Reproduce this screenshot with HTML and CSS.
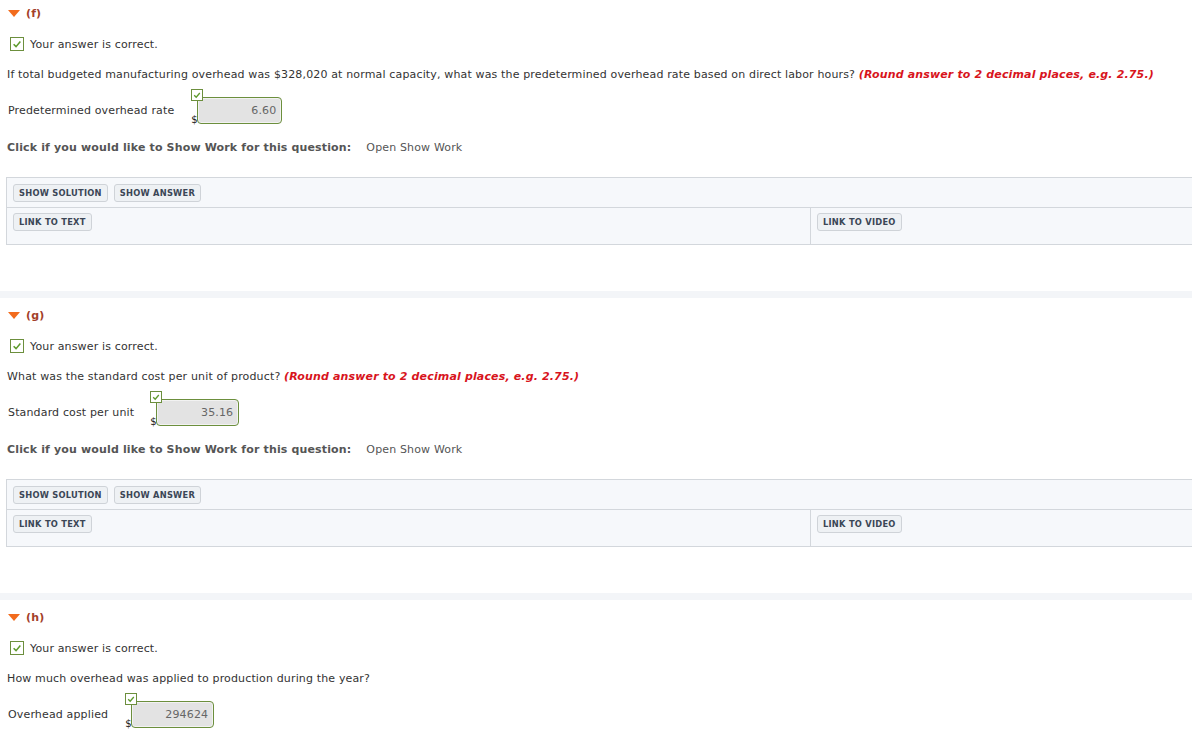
FILE: index.html
```html
<!DOCTYPE html>
<html lang="en">
<head>
    <meta charset="UTF-8">
    <title>Question Review</title>
    <link rel="stylesheet" href="styles.css">
</head>
<body>
    <div class="part">
        <div class="part-head"><span class="arrow"></span><span class="part-label">(f)</span></div>
        <div class="status"><span class="check"><svg viewBox="0 0 10 10"><path d="M2.2 5.2 L4.2 7.2 L7.8 3"/></svg></span>Your answer is correct.</div>
        <p class="question">If total budgeted manufacturing overhead was $328,020 at normal capacity, what was the predetermined overhead rate based on direct labor hours? <em class="hint">(Round answer to 2 decimal places, e.g. 2.75.)</em></p>
        <div class="answer-row">
            <span class="answer-label">Predetermined overhead rate</span>
            <div class="answer-field f-wide">
                <span class="mini-check"><svg viewBox="0 0 10 10"><path d="M2.2 5.2 L4.2 7.2 L7.8 3"/></svg></span>
                <span class="dollar">$</span>
                <div class="answer-box">6.60</div>
            </div>
        </div>
        <div class="show-work"><b>Click if you would like to Show Work for this question:</b><span class="open-work">Open Show Work</span></div>
        <div class="panel">
            <div class="panel-top"><span class="btn">Show Solution</span><span class="btn">Show Answer</span></div>
            <div class="panel-bottom">
                <div class="panel-left"><span class="btn">Link to Text</span></div>
                <div class="panel-right"><span class="btn">Link to Video</span></div>
            </div>
        </div>
        <div class="divider"></div>
    </div>

    <div class="part">
        <div class="part-head"><span class="arrow"></span><span class="part-label">(g)</span></div>
        <div class="status"><span class="check"><svg viewBox="0 0 10 10"><path d="M2.2 5.2 L4.2 7.2 L7.8 3"/></svg></span>Your answer is correct.</div>
        <p class="question">What was the standard cost per unit of product? <em class="hint">(Round answer to 2 decimal places, e.g. 2.75.)</em></p>
        <div class="answer-row">
            <span class="answer-label">Standard cost per unit</span>
            <div class="answer-field f-g">
                <span class="mini-check"><svg viewBox="0 0 10 10"><path d="M2.2 5.2 L4.2 7.2 L7.8 3"/></svg></span>
                <span class="dollar">$</span>
                <div class="answer-box">35.16</div>
            </div>
        </div>
        <div class="show-work"><b>Click if you would like to Show Work for this question:</b><span class="open-work">Open Show Work</span></div>
        <div class="panel">
            <div class="panel-top"><span class="btn">Show Solution</span><span class="btn">Show Answer</span></div>
            <div class="panel-bottom">
                <div class="panel-left"><span class="btn">Link to Text</span></div>
                <div class="panel-right"><span class="btn">Link to Video</span></div>
            </div>
        </div>
        <div class="divider"></div>
    </div>

    <div class="part last">
        <div class="part-head"><span class="arrow"></span><span class="part-label">(h)</span></div>
        <div class="status"><span class="check"><svg viewBox="0 0 10 10"><path d="M2.2 5.2 L4.2 7.2 L7.8 3"/></svg></span>Your answer is correct.</div>
        <p class="question">How much overhead was applied to production during the year?</p>
        <div class="answer-row">
            <span class="answer-label">Overhead applied</span>
            <div class="answer-field f-h">
                <span class="mini-check"><svg viewBox="0 0 10 10"><path d="M2.2 5.2 L4.2 7.2 L7.8 3"/></svg></span>
                <span class="dollar">$</span>
                <div class="answer-box">294624</div>
            </div>
        </div>
    </div>
</body>
</html>
```

FILE: styles.css
```css
* {
    margin: 0;
    padding: 0;
    box-sizing: border-box;
}

body {
    font-family: 'DejaVu Sans', Verdana, sans-serif;
    font-size: 11px;
    letter-spacing: 0.15px;
    color: #333;
    background: white;
    overflow: hidden;
}

.part {
    height: 302px;
    padding-top: 4px;
}

.part.last {
    height: auto;
}

.part-head {
    height: 18px;
    display: flex;
    align-items: center;
    padding-left: 8px;
}

.arrow {
    width: 0;
    height: 0;
    border-left: 6px solid transparent;
    border-right: 6px solid transparent;
    border-top: 7px solid #f26b1d;
    margin-right: 6px;
}

.part-label {
    color: #a3412a;
    font-weight: bold;
    font-size: 11px;
}

.status {
    display: flex;
    align-items: center;
    margin-top: 15px;
    padding-left: 10px;
    height: 14px;
}

.check {
    width: 14px;
    height: 14px;
    border: 1px solid #6c8f3d;
    background: white;
    margin-right: 6px;
    display: flex;
}

.check svg, .mini-check svg {
    width: 100%;
    height: 100%;
    fill: none;
    stroke: #5e9a2c;
    stroke-width: 1.3;
}

.question {
    margin-top: 17px;
    padding-left: 7px;
    line-height: 14px;
}

.hint {
    color: #d8141c;
    font-weight: bold;
}

.answer-row {
    display: flex;
    align-items: center;
    margin-top: 7px;
    padding-left: 8px;
    height: 36px;
}

.answer-label {
    margin-top: 6px;
}

.answer-field {
    position: relative;
    height: 36px;
    padding-top: 8px;
}

.f-wide { margin-left: 17px; }
.f-g { margin-left: 16px; }
.f-h { margin-left: 17px; }

.mini-check {
    position: absolute;
    left: 0;
    top: 0;
    width: 12px;
    height: 12px;
    border: 1px solid #6c8f3d;
    background: white;
    display: flex;
}

.dollar {
    position: absolute;
    left: 0;
    bottom: 0;
    font-size: 10px;
    line-height: 10px;
    color: #222;
}

.answer-box {
    margin-left: 6px;
    width: 85px;
    height: 27px;
    background: #e3e3e3;
    border: 1px solid #6c8f3d;
    border-radius: 4px;
    box-shadow: inset 0 0 0 1px #f2f2f2;
    text-align: right;
    padding-right: 5px;
    line-height: 25px;
    color: #666;
}

.f-g .answer-box { width: 83px; }
.f-h .answer-box { width: 83px; }

.show-work {
    margin-top: 16px;
    padding-left: 7px;
    color: #555;
    line-height: 14px;
}

.open-work {
    margin-left: 15px;
}

.panel {
    margin-top: 22px;
    margin-left: 6px;
    background: #f6f8fb;
    border: 1px solid #d3d7dc;
    border-right: none;
}

.panel-top {
    height: 30px;
    display: flex;
    align-items: center;
    gap: 6px;
    padding-left: 6px;
    border-bottom: 1px solid #d3d7dc;
}

.panel-bottom {
    display: flex;
    height: 36px;
}

.panel-left {
    width: 804px;
    padding: 5px 6px;
    border-right: 1px solid #d3d7dc;
}

.panel-right {
    padding: 5px 6px;
}

.btn {
    display: inline-block;
    height: 18px;
    line-height: 16px;
    padding: 0 5px;
    background: #eef1f4;
    border: 1px solid #cfd3d8;
    border-radius: 3px;
    color: #3b4656;
    font-size: 8.3px;
    font-weight: bold;
    text-transform: uppercase;
    letter-spacing: 0.25px;
}

.divider {
    margin-top: 46px;
    height: 7px;
    background: #f3f5f8;
}
```
